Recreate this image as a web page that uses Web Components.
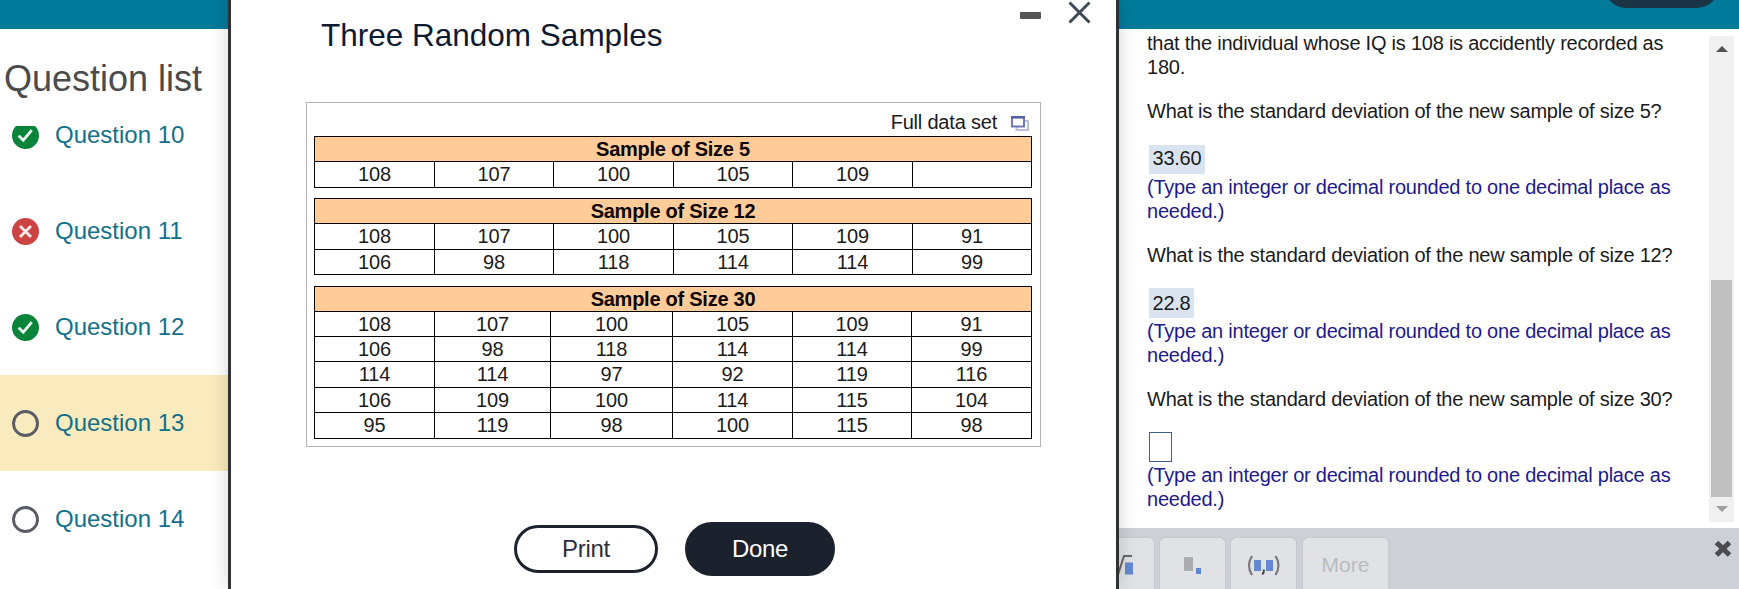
<!DOCTYPE html>
<html lang="en">
<head>
<meta charset="utf-8">
<title>Three Random Samples</title>
<style>
    html, body {
        margin: 0;
        height: 100%;
        overflow: hidden;
        background: #fff;
        font-family: "Liberation Sans", Arial, sans-serif;
    }
</style>
</head>
<body>
<quiz-app></quiz-app>

<script>
class QuizHeader extends HTMLElement {
    constructor() {
        super();
        this.attachShadow({ mode: 'open' });
        this.shadowRoot.innerHTML = `
            <style>
                :host {
                    display: flex;
                    justify-content: flex-end;
                    align-items: flex-end;
                    box-sizing: border-box;
                    height: 29px;
                    padding: 0 19px 21px 0;
                    background: #007a9b;
                    overflow: hidden;
                }
                .pill {
                    flex: none;
                    width: 117px;
                    height: 48px;
                    border-radius: 24px;
                    background: #1a3446;
                }
            </style>
            <div class="pill"></div>
        `;
    }
}
customElements.define('quiz-header', QuizHeader);

class StatusIcon extends HTMLElement {
    constructor() {
        super();
        this.attachShadow({ mode: 'open' });
    }

    connectedCallback() {
        const shapes = {
            correct: `<circle cx="13.5" cy="13.5" r="13.5" fill="#0a8438"/>
                <path d="M6.7 13.7l4.6 4.5 8.5-10" fill="none" stroke="#e9f7ed" stroke-width="2.8"/>`,
            wrong: `<circle cx="13.5" cy="13.5" r="13.5" fill="#cc4343"/>
                <path d="M8 8l11 11M19 8L8 19" fill="none" stroke="#fbecec" stroke-width="2.8"/>`,
            open: `<circle cx="13.5" cy="13.5" r="12" fill="none" stroke="#5a5d66" stroke-width="2.9"/>`
        };
        this.shadowRoot.innerHTML = `
            <style>
                :host { display: block; flex: none; width: 27px; height: 27px; }
                svg { display: block; }
            </style>
            <svg width="27" height="27" viewBox="0 0 27 27">${shapes[this.getAttribute('status')] || shapes.open}</svg>
        `;
    }
}
customElements.define('status-icon', StatusIcon);

class QuestionItem extends HTMLElement {
    constructor() {
        super();
        this.attachShadow({ mode: 'open' });
    }

    connectedCallback() {
        this.shadowRoot.innerHTML = `
            <style>
                :host {
                    display: flex;
                    align-items: center;
                    gap: 16px;
                    height: 96px;
                    padding-left: 12px;
                    font-size: 24px;
                    color: #13708a;
                }
                :host([current]) { background: #f9ebbd; }
                span { white-space: nowrap; }
            </style>
            <status-icon status="${this.getAttribute('status')}"></status-icon>
            <span><slot></slot></span>
        `;
    }
}
customElements.define('question-item', QuestionItem);

class QuestionList extends HTMLElement {
    constructor() {
        super();
        this.attachShadow({ mode: 'open' });
        this.shadowRoot.innerHTML = `
            <style>
                :host { display: flex; flex-direction: column; min-height: 0; overflow: hidden; }
                h2 {
                    flex: none;
                    box-sizing: border-box;
                    height: 97px;
                    margin: 0;
                    padding: 29px 0 0 4px;
                    font-size: 36px;
                    font-weight: normal;
                    line-height: 42px;
                    color: #4b4b4b;
                    white-space: nowrap;
                }
                .scroll { flex: 1; min-height: 0; overflow: hidden; }
                .rows { margin-top: -39px; }
            </style>
            <h2>Question list</h2>
            <div class="scroll"><div class="rows"><slot></slot></div></div>
        `;
    }
}
customElements.define('question-list', QuestionList);

class AnswerPart extends HTMLElement {
    constructor() {
        super();
        this.attachShadow({ mode: 'open' });
    }

    connectedCallback() {
        const value = this.getAttribute('value');
        this.shadowRoot.innerHTML = `
            <style>
                :host { display: block; height: 124px; margin-bottom: 20px; }
                .question { height: 24px; white-space: nowrap; }
                .field { box-sizing: border-box; height: 52px; padding: var(--field-top, 21px) 0 0 2px; }
                .value {
                    display: inline-block;
                    box-sizing: border-box;
                    height: var(--field-height, 30px);
                    padding: 0 3.5px;
                    line-height: var(--field-line, 30px);
                    background: #dae3f0;
                    vertical-align: top;
                }
                .empty {
                    width: 23px;
                    padding: 0;
                    border: 1px solid #3e618f;
                    background: #fff;
                }
                .hint { color: #1e1a8c; white-space: nowrap; }
            </style>
            <div class="question"><slot></slot></div>
            <div class="field"><span class="value ${value ? '' : 'empty'}">${value || ''}</span></div>
            <div class="hint">(Type an integer or decimal rounded to one decimal place as<br>needed.)</div>
        `;
    }
}
customElements.define('answer-part', AnswerPart);

class ScrollTrack extends HTMLElement {
    constructor() {
        super();
        this.attachShadow({ mode: 'open' });
        this.shadowRoot.innerHTML = `
            <style>
                :host {
                    display: flex;
                    flex-direction: column;
                    align-items: center;
                    box-sizing: border-box;
                    width: 25px;
                    padding: 10px 0 10px;
                    background: #f0f0f0;
                }
                svg { display: block; flex: none; }
                .thumb { width: 21px; height: 217px; margin: auto 0 9px; background: #c0c0c0; }
            </style>
            <svg width="12" height="6"><path d="M6 0l6 6H0z" fill="#505050"/></svg>
            <div class="thumb"></div>
            <svg width="12" height="6"><path d="M0 0h12L6 6z" fill="#a0a0a0"/></svg>
        `;
    }
}
customElements.define('scroll-track', ScrollTrack);

class MathPalette extends HTMLElement {
    constructor() {
        super();
        this.attachShadow({ mode: 'open' });
        this.shadowRoot.innerHTML = `
            <style>
                :host {
                    display: flex;
                    align-items: flex-start;
                    box-sizing: border-box;
                    height: 61px;
                    padding: 10px 7px 0 0;
                    background: #cfd0d7;
                    overflow: hidden;
                }
                .key {
                    flex: none;
                    display: flex;
                    justify-content: center;
                    box-sizing: border-box;
                    width: 65px;
                    height: 60px;
                    margin-right: 6px;
                    border-radius: 5px;
                    background: #e0e2e5;
                    box-shadow: 0 0 2px #b4b6bc;
                }
                .key.more {
                    width: 85px;
                    margin-left: 1px;
                    font-size: 21px;
                    line-height: 54px;
                    color: #b9bbc0;
                }
                .close { margin: 2px 0 0 auto; }
            </style>
            <div class="key">
                <svg width="65" height="51">
                    <path d="M23 29l3-2 3 9.500 6-18.500h8" fill="none" stroke="#666" stroke-width="2"/>
                    <rect x="36" y="24.500" width="8" height="12" fill="#6488d2"/>
                </svg>
            </div>
            <div class="key">
                <svg width="65" height="51">
                    <rect x="24" y="19" width="9" height="14" fill="#acacaf"/>
                    <rect x="36" y="30" width="5" height="6" fill="#5c88cf"/>
                </svg>
            </div>
            <div class="key">
                <svg width="65" height="51">
                    <path d="M21 18q-6 9.500 0 19M44.500 18q6 9.500 0 19" fill="none" stroke="#777" stroke-width="2.100"/>
                    <rect x="23" y="22" width="7" height="11" fill="#6488d2"/>
                    <rect x="35" y="22" width="7" height="11" fill="#6488d2"/>
                    <path d="M32.800 31.500v2q0 1.800-1.800 2.500" fill="none" stroke="#444" stroke-width="2"/>
                </svg>
            </div>
            <div class="key more">More</div>
            <svg class="close" width="18" height="18">
                <path d="M2.500 2.500l13 12.500M15.500 2.500L2.500 15" stroke="#4b4b50" stroke-width="5.200"/>
            </svg>
        `;
    }
}
customElements.define('math-palette', MathPalette);

class ExercisePane extends HTMLElement {
    constructor() {
        super();
        this.attachShadow({ mode: 'open' });
        this.shadowRoot.innerHTML = `
            <style>
                :host { display: flex; flex-direction: column; min-width: 0; }
                .view { flex: 1; display: flex; min-height: 0; padding: 7px 5px 6px 58px; }
                .text {
                    flex: 1;
                    min-width: 0;
                    overflow: hidden;
                    font-size: 20px;
                    line-height: 24px;
                    letter-spacing: -0.23px;
                    color: #1b1b1b;
                }
                .intro { margin: -5px 0 20px; white-space: nowrap; }
                math-palette { flex: none; }
            </style>
            <div class="view">
                <div class="text">
                    <div class="intro">that the individual whose IQ is 108 is accidently recorded as<br>180.</div>
                    <slot></slot>
                </div>
                <scroll-track></scroll-track>
            </div>
            <math-palette></math-palette>
        `;
    }
}
customElements.define('exercise-pane', ExercisePane);

class SampleTable extends HTMLElement {
    constructor() {
        super();
        this.attachShadow({ mode: 'open' });
    }

    connectedCallback() {
        const cells = this.getAttribute('values').split(',');
        this.shadowRoot.innerHTML = `
            <style>
                :host {
                    display: grid;
                    grid-template-columns: var(--cols, 119px 118px 119px 118px 119px 118px);
                    grid-template-rows: var(--rows);
                    gap: 1px;
                    padding: 1px;
                    background: #000;
                    font-size: 20px;
                    line-height: 24px;
                    color: #1b1b1b;
                    text-align: center;
                }
                div { background: #fff; letter-spacing: -0.2px; }
                .title {
                    grid-column: 1 / -1;
                    background: #ffcc99;
                    font-weight: bold;
                    color: #0c0503;
                    letter-spacing: -0.25px;
                }
            </style>
            <div class="title"><slot></slot></div>
            ${cells.map(c => `<div>${c}</div>`).join('')}
        `;
    }
}
customElements.define('sample-table', SampleTable);

class PillButton extends HTMLElement {
    constructor() {
        super();
        this.attachShadow({ mode: 'open' });
        this.shadowRoot.innerHTML = `
            <style>
                :host {
                    display: flex;
                    align-items: center;
                    justify-content: center;
                    box-sizing: border-box;
                    width: 144px;
                    height: 48px;
                    border: 3px solid #1c232e;
                    border-radius: 27px;
                    font-size: 24px;
                    letter-spacing: -0.3px;
                    color: #2b303c;
                }
                :host([primary]) { width: 150px; height: 54px; background: #1b212d; border-color: #1b212d; color: #fff; }
            </style>
            <slot></slot>
        `;
    }
}
customElements.define('pill-button', PillButton);

class DataDialog extends HTMLElement {
    constructor() {
        super();
        this.attachShadow({ mode: 'open' });
        this.shadowRoot.innerHTML = `
            <style>
                :host {
                    display: flex;
                    flex-direction: column;
                    box-sizing: border-box;
                    border: solid #303134;
                    border-width: 0 3px;
                    background: #fff;
                    box-shadow: 0 0 18px rgba(0, 0, 0, 0.16);
                }
                header {
                    display: flex;
                    align-items: flex-start;
                    flex: none;
                    box-sizing: border-box;
                    height: 102px;
                    padding: 0 25px 0 90px;
                }
                h1 {
                    flex: 1;
                    margin: 17px 0 0;
                    font-size: 31.500px;
                    font-weight: normal;
                    line-height: 37px;
                    color: #0e1a30;
                }
                svg { display: block; flex: none; }
                .min { margin: 12px 27px 0 0; }
                .shut { margin-top: 1px; }
                .box {
                    flex: none;
                    display: flex;
                    flex-direction: column;
                    box-sizing: border-box;
                    width: 735px;
                    height: 345px;
                    margin-left: 75px;
                    padding: 7px 8px 0 7px;
                    border: 1px solid #b3b4b8;
                }
                .full {
                    display: flex;
                    justify-content: flex-end;
                    height: 26px;
                    padding-right: 3px;
                    font-size: 20px;
                    line-height: 24px;
                    letter-spacing: -0.2px;
                    color: #1b1b1b;
                }
                .full svg { margin: 6px 0 0 14px; }
                footer {
                    display: flex;
                    align-items: center;
                    gap: 27px;
                    margin: 75px 0 0 283px;
                    height: 54px;
                }
            </style>
            <header>
                <h1>Three Random Samples</h1>
                <svg class="min" width="21" height="7"><rect width="21" height="7" rx="1" fill="#55565a"/></svg>
                <svg class="shut" width="23" height="23"><path d="M1.500 1.500l20 20M21.500 1.500l-20 20" stroke="#3e4a55" stroke-width="3"/></svg>
            </header>
            <section class="box">
                <div class="full">
                    Full data set
                    <svg width="18" height="15">
                        <rect x="5.500" y="5" width="11.500" height="9" fill="#fff" stroke="#b9bddf" stroke-width="1.900"/>
                        <rect x="1" y="1" width="12" height="9.500" fill="#fff" stroke="#6a74b8" stroke-width="1.900"/>
                        <path d="M0 1.300h14" stroke="#5560a8" stroke-width="2.600"/>
                    </svg>
                </div>
                <slot></slot>
            </section>
            <footer>
                <pill-button>Print</pill-button>
                <pill-button primary>Done</pill-button>
            </footer>
        `;
    }
}
customElements.define('data-dialog', DataDialog);

class QuizApp extends HTMLElement {
    constructor() {
        super();
        this.attachShadow({ mode: 'open' });
        this.shadowRoot.innerHTML = `
            <style>
                :host {
                    position: relative;
                    display: flex;
                    flex-direction: column;
                    height: 589px;
                    overflow: hidden;
                }
                quiz-header { flex: none; }
                main {
                    flex: 1;
                    display: grid;
                    grid-template-columns: 228px 1fr;
                    grid-template-rows: minmax(0, 1fr);
                    min-height: 0;
                }
                exercise-pane { margin-left: 861px; }
                /* the dialog floats over the page */
                data-dialog { position: absolute; top: 0; bottom: 0; left: 228px; width: 891px; }
                .t5 { --rows: 24px 25px; margin-bottom: 10px; }
                .t12 { --rows: 24px 25px 24px; margin-bottom: 11px; }
                .t30 {
                    --rows: 24px 24px 24px 25px 24px 25px;
                    --cols: 119px 115px 121px 119px 118px 119px;
                }
                .first { --field-top: 22px; --field-height: 29px; --field-line: 27px; }
            </style>
            <quiz-header></quiz-header>
            <main>
                <question-list>
                    <question-item status="correct">Question 10</question-item>
                    <question-item status="wrong">Question 11</question-item>
                    <question-item status="correct">Question 12</question-item>
                    <question-item status="open" current>Question 13</question-item>
                    <question-item status="open">Question 14</question-item>
                </question-list>
                <exercise-pane>
                    <answer-part class="first" value="33.60">What is the standard deviation of the new sample of size 5?</answer-part>
                    <answer-part value="22.8">What is the standard deviation of the new sample of size 12?</answer-part>
                    <answer-part>What is the standard deviation of the new sample of size 30?</answer-part>
                </exercise-pane>
            </main>
            <data-dialog>
                <sample-table class="t5" values="108,107,100,105,109,">Sample of Size 5</sample-table>
                <sample-table class="t12" values="108,107,100,105,109,91,106,98,118,114,114,99">Sample of Size 12</sample-table>
                <sample-table class="t30" values="108,107,100,105,109,91,106,98,118,114,114,99,114,114,97,92,119,116,106,109,100,114,115,104,95,119,98,100,115,98">Sample of Size 30</sample-table>
            </data-dialog>
        `;
    }
}
customElements.define('quiz-app', QuizApp);
</script>
</body>
</html>
